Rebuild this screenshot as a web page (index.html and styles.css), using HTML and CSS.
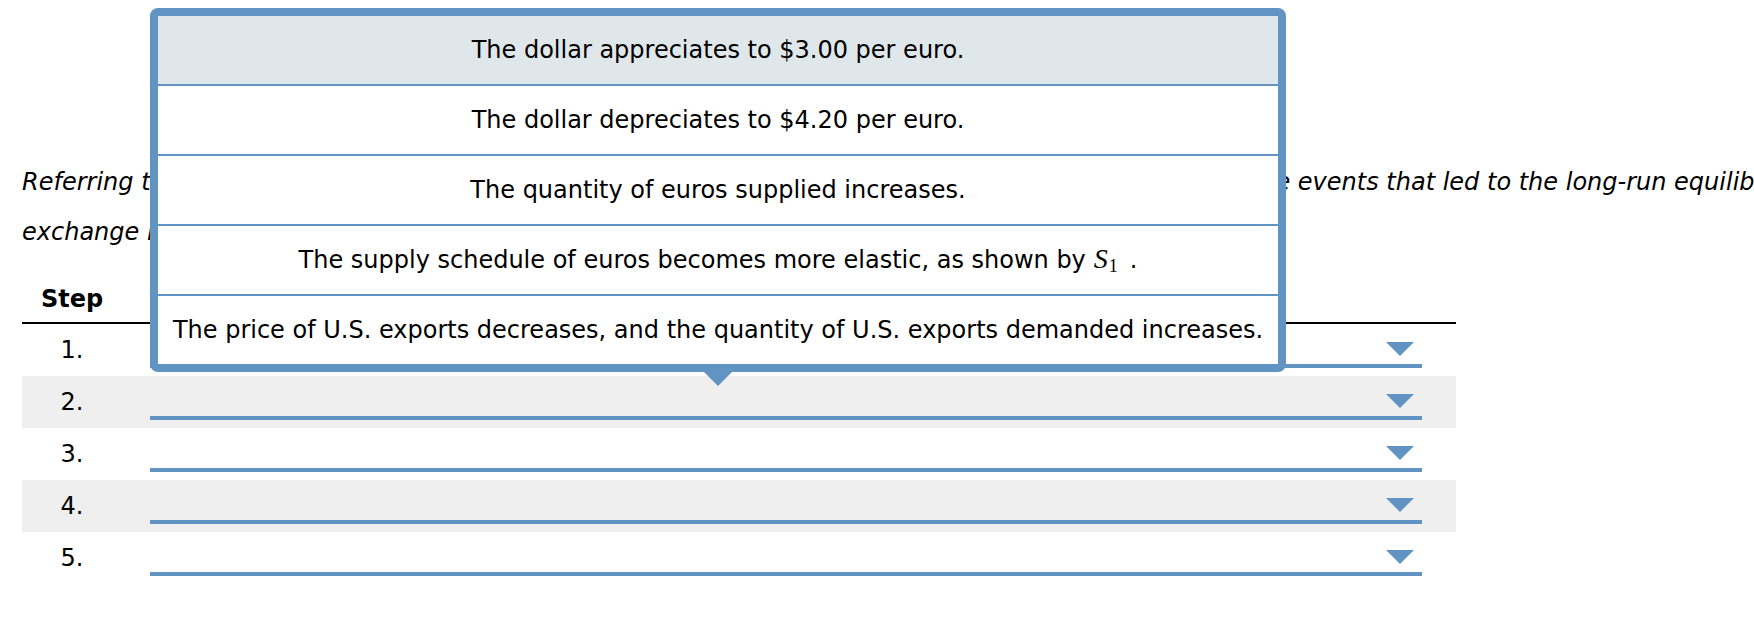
FILE: index.html
```html
<!DOCTYPE html>
<html lang="en">
<head>
    <meta charset="UTF-8">
    <meta name="viewport" content="width=device-width, initial-scale=1.0">
    <title>Exchange rate steps</title>
    <link rel="stylesheet" href="styles.css">
</head>
<body>

    <div class="page">
        <p class="prompt">Referring to the preceding graph, use the drop-down menus in the following table to arrange in order the events that led to the long-run equilibrium exchange rate.</p>

        <div class="steps">
            <div class="steps-head">
                <div class="col-step">Step</div>
            </div>
            <div class="step-row">
                <div class="col-step">1.</div>
                <div class="select"><span class="caret"></span></div>
            </div>
            <div class="step-row alt">
                <div class="col-step">2.</div>
                <div class="select"><span class="caret"></span></div>
            </div>
            <div class="step-row">
                <div class="col-step">3.</div>
                <div class="select"><span class="caret"></span></div>
            </div>
            <div class="step-row alt">
                <div class="col-step">4.</div>
                <div class="select"><span class="caret"></span></div>
            </div>
            <div class="step-row">
                <div class="col-step">5.</div>
                <div class="select"><span class="caret"></span></div>
            </div>
        </div>
    </div>

    <div class="menu">
        <div class="menu-item active">The dollar appreciates to $3.00 per euro.</div>
        <div class="menu-item">The dollar depreciates to $4.20 per euro.</div>
        <div class="menu-item">The quantity of euros supplied increases.</div>
        <div class="menu-item">The supply schedule of euros becomes more elastic, as shown by <span class="math">S<sub>1</sub></span>.</div>
        <div class="menu-item">The price of U.S. exports decreases, and the quantity of U.S. exports demanded increases.</div>
    </div>

</body>
</html>
```

FILE: styles.css
```css
html {
    overflow: hidden;
}

body {
    margin: 0;
    font-family: "DejaVu Sans", Verdana, sans-serif;
    font-size: 24px;
    color: #000000;
    background-color: #ffffff;
    position: relative;
}

.page {
    padding-left: 22px;
}

.prompt {
    margin: 157px 0 0;
    width: 1850px;
    font-style: italic;
    line-height: 50px;
}

.steps {
    width: 1434px;
}

.steps-head {
    height: 56px;
    padding-bottom: 9px;
    border-bottom: 2px solid #000000;
    display: flex;
    align-items: flex-end;
}

.steps-head .col-step {
    font-weight: bold;
    line-height: 28px;
}

.col-step {
    width: 100px;
    text-align: center;
    flex-shrink: 0;
}

.step-row {
    height: 52px;
    display: flex;
    align-items: center;
}

.step-row.alt {
    background-color: #efefef;
}

.select {
    align-self: flex-start;
    flex: 1;
    margin: 0 34px 0 28px;
    padding: 18px 8px 8px 0;
    border-bottom: 4px solid #6194c3;
    display: flex;
    justify-content: flex-end;
}

.caret {
    width: 0;
    height: 0;
    border-left: 14px solid transparent;
    border-right: 14px solid transparent;
    border-top: 14px solid #6194c3;
}

.menu {
    position: absolute;
    top: 8px;
    left: 150px;
    width: 1120px;
    border: 8px solid #6194c3;
    border-radius: 8px;
    background-color: #ffffff;
}

.menu::after {
    content: "";
    position: absolute;
    top: calc(100% + 8px);
    left: 546px;
    border-left: 14px solid transparent;
    border-right: 14px solid transparent;
    border-top: 14px solid #6194c3;
}

.menu-item {
    height: 68px;
    display: flex;
    align-items: center;
    justify-content: center;
    border-bottom: 2px solid #6194c3;
    white-space: nowrap;
}

.menu-item:last-child {
    border-bottom: none;
}

.menu-item.active {
    background-color: #dfe7ea;
}

.math {
    font-family: "Liberation Serif", "Times New Roman", serif;
    font-style: italic;
    font-size: 28px;
    margin: 0 12px 0 8px;
}

.math sub {
    font-style: normal;
    font-size: 18px;
    vertical-align: -4px;
    margin-left: 1px;
}
```
